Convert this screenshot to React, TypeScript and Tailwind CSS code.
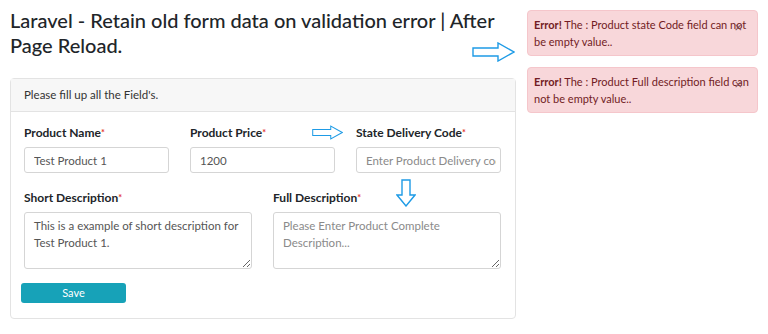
const Arrow = ({ dir, className }: { dir: 'right' | 'down'; className: string }) => {
  const pts =
    dir === 'right'
      ? '1,6 26,6 26,1 42,10 26,19 26,14 1,14'
      : '6,1 14,1 14,16 19,16 10,27 1,16 6,16'
  const box = dir === 'right' ? '0 0 43 20' : '0 0 20 28'
  return (
    <svg viewBox={box} className={className} fill="white" stroke="#1e9be6" strokeWidth="1.4">
      <polygon points={pts} strokeLinejoin="miter" />
    </svg>
  )
}

const Label = ({ text }: { text: string }) => (
  <label className="block text-[12px] font-bold text-[#212529] leading-[16px] mb-[6px]">
    {text}
    <span className="text-[#e3342f] text-[9px] align-top">*</span>
  </label>
)

const ErrorAlert = ({ msg }: { msg: string }) => (
  <div className="relative bg-[#f8d7da] border border-[#f5c6cb] text-[#721c24] rounded-[4px] px-[6px] py-[5px] text-[11px] leading-[17px]">
    <strong>Error!</strong> The : {msg}
    <span className="absolute right-[15px] top-[10px] text-[13px] leading-[13px] text-[#7d4a4f]">×</span>
  </div>
)

export default function App() {
  return (
    <div className="relative w-[768px] h-[334px] bg-white overflow-hidden font-['Lato','Open_Sans',sans-serif] text-[#212529]">
      <div className="flex gap-[11px] pl-[10px] pt-[8px]">
        <div className="w-[506px]">
          <h1 className="text-[20px] leading-[25px] font-medium text-[#212529] mb-[20px]">
            Laravel - Retain old form data on validation error | After Page Reload.
          </h1>

          <div className="border border-[#e3e3e3] rounded-[4px]">
            <div className="bg-[#f7f7f7] border-b border-[#e3e3e3] h-[33px] flex items-center px-[13px] text-[11.5px] text-[#333]">
              Please fill up all the Field's.
            </div>
            <div className="pl-[13px] pr-[14px] pt-[13px] pb-[15px]">
              <div className="grid grid-cols-3 gap-x-[21px]">
                <div>
                  <Label text="Product Name" />
                  <input
                    className="block w-full h-[26px] border border-[#d5d5d5] rounded-[3px] px-[9px] text-[11.5px] text-[#555] outline-none"
                    defaultValue="Test Product 1"
                  />
                </div>
                <div>
                  <Label text="Product Price" />
                  <input
                    className="block w-full h-[26px] border border-[#d5d5d5] rounded-[3px] px-[9px] text-[11.5px] text-[#555] outline-none"
                    defaultValue="1200"
                  />
                </div>
                <div>
                  <Label text="State Delivery Code" />
                  <input
                    className="block w-full h-[26px] border border-[#d5d5d5] rounded-[3px] pl-[9px] pr-[4px] text-[11.5px] text-[#555] placeholder:text-[#8a8a8a] outline-none"
                    placeholder="Enter Product Delivery code"
                  />
                </div>
              </div>

              <div className="grid grid-cols-2 gap-x-[21px] mt-[17px]">
                <div>
                  <Label text="Short Description" />
                  <textarea
                    className="block w-full h-[57px] border border-[#d5d5d5] rounded-[3px] px-[9px] py-[4px] text-[11.5px] leading-[17px] text-[#555] outline-none"
                    defaultValue="This is a example of short description for Test Product 1."
                  />
                </div>
                <div>
                  <Label text="Full Description" />
                  <textarea
                    className="block w-full h-[57px] border border-[#d5d5d5] rounded-[3px] px-[9px] py-[4px] text-[11.5px] leading-[17px] text-[#555] placeholder:text-[#8a8a8a] outline-none"
                    placeholder="Please Enter Product Complete Description..."
                  />
                </div>
              </div>

              <button className="block mt-[14px] -ml-[3px] w-[105px] h-[20px] bg-[#17a2b8] rounded-[3px] text-white text-[11px] leading-[20px]">
                Save
              </button>
            </div>
          </div>
        </div>

        <div className="w-[231px] pt-[2px] flex flex-col gap-[11px]">
          <ErrorAlert msg="Product state Code field can not be empty value.." />
          <ErrorAlert msg="Product Full description field can not be empty value.." />
        </div>
      </div>

      <Arrow dir="right" className="absolute left-[472px] top-[42px] w-[43px] h-[20px]" />
      <Arrow dir="right" className="absolute left-[312px] top-[123px] w-[31px] h-[19px]" />
      <Arrow dir="down" className="absolute left-[396px] top-[179px] w-[20px] h-[28px]" />
    </div>
  )
}
